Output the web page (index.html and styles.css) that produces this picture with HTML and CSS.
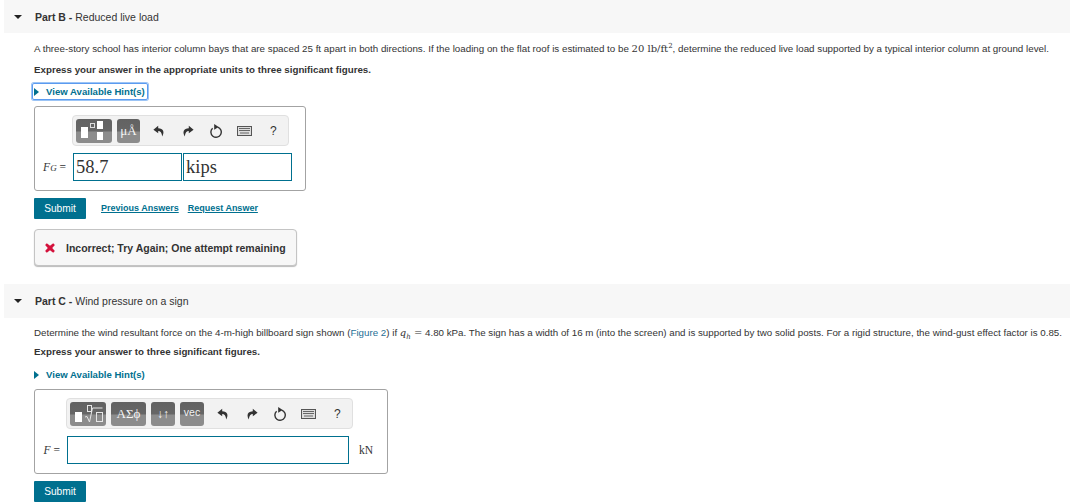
FILE: index.html
```html
<!DOCTYPE html>
<html lang="en">
<head>
<meta charset="UTF-8">
<title>Part B and Part C</title>
<link rel="stylesheet" href="styles.css">
</head>
<body>

<svg class="defs" width="0" height="0">
    <symbol id="undo" viewBox="0 0 12 12"><path d="M5.2 0.8 L0.4 4.8 L5.2 8.2 V6 C7.4 6 8.8 7.6 9.2 11.4 C11.8 7 10.4 3.4 5.2 3.2 Z"/></symbol>
    <symbol id="redo" viewBox="0 0 12 12"><path d="M6.8 0.8 L11.6 4.8 L6.8 8.2 V6 C4.6 6 3.2 7.6 2.8 11.4 C0.2 7 1.6 3.4 6.8 3.2 Z"/></symbol>
    <symbol id="reset" viewBox="0 0 14 14"><path d="M8.6 3.1 A5.2 5.2 0 1 1 3.6 4.2" fill="none" stroke="currentColor" stroke-width="1.4"/><path d="M5.2 0 L9.6 3 L5.2 5.8 Z"/></symbol>
    <symbol id="keys" viewBox="0 0 15 10"><rect x="0.5" y="0.5" width="14" height="9" fill="#ddd" stroke="#555"/><path d="M2 2.5 H13 M2 4.5 H13 M3 7 H12" stroke="#666" fill="none"/></symbol>
</svg>

<section class="part part-b">
    <header class="part-head">
        <span class="caret"></span>
        <h3><b>Part B -</b> Reduced live load</h3>
    </header>
    <div class="part-body">
        <p class="intro">A three-story school has interior column bays that are spaced 25 ft apart in both directions. If the loading on the flat roof is estimated to be <span class="math">20 lb/ft<sup>2</sup></span>, determine the reduced live load supported by a typical interior column at ground level.</p>
        <p class="express">Express your answer in the appropriate units to three significant figures.</p>
        <a class="hint focused"><span class="hint-arrow"></span>View Available Hint(s)</a>

        <div class="answer answer-b">
            <div class="toolbar">
                <span class="tool tool-frac">
                    <i class="sq big"></i><i class="sq tiny"></i>
                    <span class="stack"><i class="sq half"></i><i class="sq half"></i></span>
                </span>
                <span class="tool tool-text tool-units">μÅ</span>
                <div class="actions">
                    <svg class="act"><use href="#undo"/></svg>
                    <svg class="act"><use href="#redo"/></svg>
                    <svg class="act act-reset"><use href="#reset"/></svg>
                    <svg class="act act-keys"><use href="#keys"/></svg>
                    <span class="help">?</span>
                </div>
            </div>
            <div class="entry">
                <span class="label"><i>F<small>G</small></i> =</span>
                <div class="field field-value">58.7</div>
                <div class="field field-unit">kips</div>
            </div>
        </div>

        <div class="submit-row">
            <button class="submit">Submit</button>
            <a class="link">Previous Answers</a>
            <a class="link">Request Answer</a>
        </div>

        <div class="feedback">
            <svg class="cross" viewBox="0 0 10 10"><path d="M1.8 0.3 L5 2.8 L8.2 0.3 L9.9 2.1 L7.2 5 L9.9 7.9 L8.2 9.7 L5 7.2 L1.8 9.7 L0.1 7.9 L2.8 5 L0.1 2.1 Z"/></svg>
            <span>Incorrect; Try Again; One attempt remaining</span>
        </div>
    </div>
</section>

<section class="part part-c">
    <header class="part-head">
        <span class="caret"></span>
        <h3><b>Part C -</b> Wind pressure on a sign</h3>
    </header>
    <div class="part-body">
        <p class="intro">Determine the wind resultant force on the 4-m-high billboard sign shown (<a class="figure">Figure 2</a>) if <span class="math"><i>q<sub>h</sub></i> =</span> 4.80 kPa. The sign has a width of 16 m (into the screen) and is supported by two solid posts. For a rigid structure, the wind-gust effect factor is 0.85.</p>
        <p class="express">Express your answer to three significant figures.</p>
        <a class="hint"><span class="hint-arrow"></span>View Available Hint(s)</a>

        <div class="answer answer-c">
            <div class="toolbar">
                <span class="tool tool-root">
                    <i class="sq root-box"></i>
                    <svg class="root-sign" viewBox="0 0 18 16"><path d="M0 10 L2 9.5 L4.5 15 L7.5 1 H17.5" fill="none" stroke="#e6e6e6"/></svg>
                    <i class="sq root-in"></i><i class="sq root-index"></i>
                </span>
                <span class="tool tool-text tool-greek">ΑΣϕ</span>
                <span class="tool tool-text tool-arrows">↓↑</span>
                <span class="tool tool-vec">vec</span>
                <div class="actions">
                    <svg class="act"><use href="#undo"/></svg>
                    <svg class="act"><use href="#redo"/></svg>
                    <svg class="act act-reset"><use href="#reset"/></svg>
                    <svg class="act act-keys"><use href="#keys"/></svg>
                    <span class="help">?</span>
                </div>
            </div>
            <div class="entry">
                <span class="label label-f"><i>F</i> =</span>
                <div class="field field-wide"></div>
                <span class="unit">kN</span>
            </div>
        </div>

        <div class="submit-row">
            <button class="submit">Submit</button>
        </div>
    </div>
</section>

</body>
</html>
```

FILE: styles.css
```css
html, body {
    margin: 0;
    height: 502px;
    overflow: hidden;
}
body {
    font-family: "Liberation Sans", Arial, sans-serif;
    font-size: 9.75px;
    color: #333;
    background: #fff;
}
.defs {
    display: block;
    height: 0;
}
p {
    margin: 0;
}

.part-head {
    display: flex;
    align-items: center;
    margin-left: 4px;
    height: 33px;
    background: #f7f7f7;
}
.part-c .part-head {
    height: 34px;
}
.caret {
    width: 0;
    height: 0;
    margin-left: 10px;
    margin-right: 13px;
    border-left: 4px solid transparent;
    border-right: 4px solid transparent;
    border-top: 4px solid #222;
}
.part-head h3 {
    margin: 0;
    font-size: 10.5px;
    font-weight: normal;
}
.part-body {
    padding-left: 34px;
}

.intro {
    white-space: nowrap;
    height: 14px;
    line-height: 14px;
}
.part-b .intro {
    padding-top: 9px;
    font-size: 9.79px;
}
.part-c .intro {
    padding-top: 8px;
    font-size: 9.76px;
}
.math {
    font-family: "DejaVu Serif", "Liberation Serif", serif;
    font-size: 10px;
}
.math sup,
.math sub {
    font-size: 7px;
    line-height: 0;
}
.figure {
    color: #1f6f96;
}
.express {
    font-weight: bold;
    line-height: 14px;
    margin-top: 7px;
}
.part-c .express {
    margin-top: 5px;
}

.hint {
    display: flex;
    align-items: center;
    width: max-content;
    height: 17px;
    margin-top: 7px;
    color: #00708f;
    font-size: 9.6px;
    font-weight: bold;
}
.hint-arrow {
    width: 0;
    height: 0;
    margin-right: 7px;
    border-top: 4px solid transparent;
    border-bottom: 4px solid transparent;
    border-left: 5px solid #00708f;
}
.hint.focused {
    margin-top: 6px;
    margin-left: -2px;
    padding: 0 2px 0 1px;
    height: 15px;
    border: 1px solid #5b9bf0;
    border-radius: 2px;
    box-shadow: 0 0 0 1px #9cc4f5;
}

.answer {
    box-sizing: border-box;
    border: 1px solid #a3a3a3;
    border-radius: 3px;
    height: 85px;
    margin-top: 6px;
}
.answer-b {
    width: 272px;
    padding: 8px 0 0 37px;
}
.answer-c {
    width: 354px;
    padding: 8px 0 0 31px;
}

.toolbar {
    box-sizing: border-box;
    display: flex;
    align-items: center;
    gap: 5px;
    height: 31px;
    padding-left: 3px;
    background: #f2f2f2;
    border: 1px solid #e0e0e0;
    border-radius: 4px;
}
.answer-b .toolbar {
    width: 217px;
}
.answer-c .toolbar {
    width: 287px;
}
.tool {
    position: relative;
    display: block;
    flex: none;
    height: 24px;
    border-radius: 3px;
    background: linear-gradient(#626262 0, #666 48%, #8c8c8c 56%, #8c8c8c 100%);
    overflow: hidden;
}
.tool-frac {
    width: 36px;
}
.tool-root {
    width: 36px;
}
.tool-text {
    color: #f6f6f6;
    font-family: "Liberation Serif", serif;
    font-size: 13px;
    line-height: 24px;
    text-align: center;
}
.tool-units {
    width: 23px;
}
.tool-greek {
    width: 35px;
}
.tool-arrows {
    width: 24px;
    font-size: 12px;
}
.tool-vec {
    width: 24px;
    color: #f2f2f2;
    font-size: 10.5px;
    line-height: 20px;
    text-align: center;
}
.sq {
    position: absolute;
    display: block;
    box-sizing: border-box;
}
.big {
    left: 5px;
    top: 8px;
    width: 7px;
    height: 11px;
    background: #fff;
}
.tiny {
    left: 14px;
    top: 4px;
    width: 5px;
    height: 5px;
    border: 1px solid #ddd;
}
.stack {
    position: absolute;
    left: 21px;
    top: 2px;
    width: 6px;
}
.half {
    position: static;
    width: 6px;
    height: 8px;
    background: #fff;
    margin-bottom: 3px;
}
.root-box {
    left: 5px;
    top: 10px;
    width: 7px;
    height: 10px;
    background: #fff;
}
.root-sign {
    position: absolute;
    left: 15px;
    top: 5px;
    width: 18px;
    height: 16px;
}
.root-in {
    left: 26px;
    top: 10px;
    width: 7px;
    height: 10px;
    border: 1px solid #e6e6e6;
}
.root-index {
    left: 17px;
    top: 3px;
    width: 5px;
    height: 7px;
    border: 1px solid #e6e6e6;
}

.actions {
    display: grid;
    flex: none;
    grid-template-columns: repeat(5, 28.5px);
    justify-items: center;
    align-items: center;
    color: #333;
}
.act {
    display: block;
    width: 12px;
    height: 12px;
    fill: #333;
}
.act-reset {
    width: 14px;
    height: 14px;
}
.act-keys {
    width: 15px;
    height: 10px;
}
.help {
    font-family: "Liberation Sans", sans-serif;
    font-size: 12px;
}

.entry {
    display: flex;
    align-items: center;
    height: 28px;
    margin-top: 7px;
    margin-left: 1px;
    position: relative;
}
.label {
    position: absolute;
    right: 100%;
    margin-right: 7px;
    white-space: nowrap;
    font-family: "Liberation Serif", serif;
    font-size: 11.5px;
}
.label small {
    font-size: 9px;
}
.field {
    box-sizing: border-box;
    height: 28px;
    border: 1px solid #00708f;
    background: #fff;
    font-family: "Liberation Serif", serif;
    font-size: 18.5px;
    line-height: 26px;
    padding-left: 2px;
}
.field-value,
.field-unit {
    width: 109px;
}
.field-unit {
    margin-left: 1px;
}
.field-wide {
    width: 282px;
}
.unit {
    margin-left: 10px;
    font-family: "Liberation Serif", serif;
    font-size: 11.5px;
}

.submit-row {
    display: flex;
    align-items: center;
    height: 21px;
    margin-top: 7px;
}
.submit {
    width: 52px;
    height: 21px;
    padding: 0;
    border: 0;
    border-radius: 1px;
    background: #00708f;
    color: #fff;
    font-family: inherit;
    font-size: 10.2px;
}
.link {
    color: #00708f;
    font-size: 9px;
    font-weight: bold;
    text-decoration: underline;
    margin-left: 9px;
    margin-bottom: 2px;
}
.submit + .link {
    margin-left: 15px;
}

.feedback {
    box-sizing: border-box;
    display: flex;
    align-items: center;
    width: 263px;
    height: 37px;
    margin-top: 10px;
    padding-left: 10px;
    background: #f7f7f7;
    border: 1px solid #c4c4c4;
    border-radius: 4px;
    box-shadow: 0 1px 1px #bbb;
    font-size: 10.5px;
    font-weight: bold;
}
.cross {
    width: 10px;
    height: 10px;
    margin-right: 11px;
    fill: #d4123c;
}
.part-c {
    margin-top: 18px;
}
```
